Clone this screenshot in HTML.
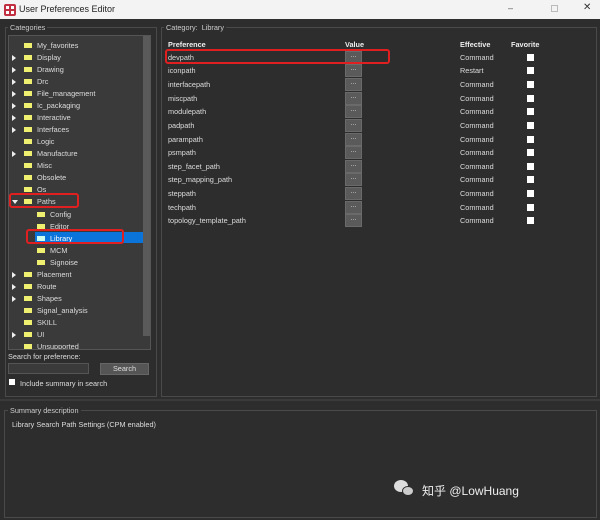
<!DOCTYPE html>
<html><head><meta charset="utf-8"><style>
*{margin:0;padding:0;box-sizing:border-box}
body{width:600px;height:520px;background:#2d2d2d;font-family:"Liberation Sans","Noto Sans CJK SC",sans-serif;font-size:7.3px;color:#ddd;position:relative;overflow:hidden}
.abs{position:absolute}
.title{left:0;top:0;width:600px;height:19px;background:#f3f3f3;color:#222;font-size:9px}
.grp{border:1px solid #4a4a4a}
.lbl{background:#2d2d2d;padding:0 2px;color:#ccc}
.tree{left:8px;top:35px;width:143px;height:315px;background:#3a3a3a;border:1px solid #555;overflow:hidden}
.ti{position:absolute;height:11px;line-height:11px;white-space:nowrap}
.fd{display:inline-block;width:8px;height:5px;background:#f0f070;margin-right:5px;vertical-align:middle;position:relative;top:-1px}
.ar{position:absolute;width:0;height:0;border-top:3px solid transparent;border-bottom:3px solid transparent;border-left:4px solid #eee;top:3px}
.row{position:absolute;left:168px;height:12px;line-height:12px;width:420px}
.btn{position:absolute;left:177px;top:-1px;width:17px;height:13px;background:#5a5a5a;border:1px solid #6a6a6a;text-align:center;line-height:8px;font-size:7px}
.eff{position:absolute;left:292px}
.cb{position:absolute;left:359px;top:2px;width:7px;height:7px;background:#fff}
.red{position:absolute;border:2px solid #e02020;border-radius:3px}
</style></head><body>
<div class="abs title">
<div class="abs" style="left:4px;top:4px;width:12px;height:12px;background:#c03040;border-radius:2px"><div class="abs" style="left:2px;top:2px;width:3px;height:3px;background:#fff"></div><div class="abs" style="left:7px;top:2px;width:3px;height:3px;background:#fff"></div><div class="abs" style="left:2px;top:7px;width:3px;height:3px;background:#fff"></div><div class="abs" style="left:7px;top:7px;width:3px;height:3px;background:#fff"></div></div>
<div class="abs" style="left:19px;top:4px">User Preferences Editor</div>
<div class="abs" style="left:508px;top:3px;color:#555">–</div>
<div class="abs" style="left:551px;top:5px;width:7px;height:7px;border:1px solid #bbb"></div>
<div class="abs" style="left:583px;top:2px;font-size:10px;color:#333">✕</div>
</div>
<div class="abs grp" style="left:5px;top:27px;width:152px;height:370px"></div>
<div class="abs lbl" style="left:8px;top:23px">Categories</div>
<div class="abs tree">
<div class="abs" style="left:134px;top:0;width:7px;height:300px;background:#5a5a5a"></div>
<div class="ti" style="left:15px;top:4px"><span class="fd"></span>My_favorites</div>
<div class="ti" style="left:15px;top:16px"><span class="ar" style="left:-12px"></span><span class="fd"></span>Display</div>
<div class="ti" style="left:15px;top:28px"><span class="ar" style="left:-12px"></span><span class="fd"></span>Drawing</div>
<div class="ti" style="left:15px;top:40px"><span class="ar" style="left:-12px"></span><span class="fd"></span>Drc</div>
<div class="ti" style="left:15px;top:52px"><span class="ar" style="left:-12px"></span><span class="fd"></span>File_management</div>
<div class="ti" style="left:15px;top:64px"><span class="ar" style="left:-12px"></span><span class="fd"></span>Ic_packaging</div>
<div class="ti" style="left:15px;top:76px"><span class="ar" style="left:-12px"></span><span class="fd"></span>Interactive</div>
<div class="ti" style="left:15px;top:88px"><span class="ar" style="left:-12px"></span><span class="fd"></span>Interfaces</div>
<div class="ti" style="left:15px;top:100px"><span class="fd"></span>Logic</div>
<div class="ti" style="left:15px;top:112px"><span class="ar" style="left:-12px"></span><span class="fd"></span>Manufacture</div>
<div class="ti" style="left:15px;top:124px"><span class="fd"></span>Misc</div>
<div class="ti" style="left:15px;top:136px"><span class="fd"></span>Obsolete</div>
<div class="ti" style="left:15px;top:148px"><span class="fd"></span>Os</div>
<div class="ti" style="left:15px;top:160px"><span class="abs" style="left:-12px;top:4px;border-left:3px solid transparent;border-right:3px solid transparent;border-top:4px solid #eee"></span><span class="fd"></span>Paths</div>
<div class="ti" style="left:28px;top:173px"><span class="fd"></span>Config</div>
<div class="ti" style="left:28px;top:185px"><span class="fd"></span>Editor</div>
<div class="abs" style="left:26px;top:196px;width:108px;height:11px;background:#0a74da"></div>
<div class="ti" style="left:28px;top:197px;color:#fff"><span class="fd" style="background:#cfe"></span>Library</div>
<div class="ti" style="left:28px;top:209px"><span class="fd"></span>MCM</div>
<div class="ti" style="left:28px;top:221px"><span class="fd"></span>Signoise</div>
<div class="ti" style="left:15px;top:233px"><span class="ar" style="left:-12px"></span><span class="fd"></span>Placement</div>
<div class="ti" style="left:15px;top:245px"><span class="ar" style="left:-12px"></span><span class="fd"></span>Route</div>
<div class="ti" style="left:15px;top:257px"><span class="ar" style="left:-12px"></span><span class="fd"></span>Shapes</div>
<div class="ti" style="left:15px;top:269px"><span class="fd"></span>Signal_analysis</div>
<div class="ti" style="left:15px;top:281px"><span class="fd"></span>SKILL</div>
<div class="ti" style="left:15px;top:293px"><span class="ar" style="left:-12px"></span><span class="fd"></span>UI</div>
<div class="ti" style="left:15px;top:305px"><span class="fd"></span>Unsupported</div>
</div>
<div class="red" style="left:9px;top:193px;width:70px;height:15px"></div>
<div class="red" style="left:26px;top:229px;width:98px;height:15px"></div>
<div class="abs" style="left:8px;top:352px">Search for preference:</div>
<div class="abs" style="left:8px;top:363px;width:81px;height:11px;background:#3a3a3a;border:1px solid #555"></div>
<div class="abs" style="left:100px;top:363px;width:49px;height:12px;background:#555;border:1px solid #666;text-align:center;line-height:10px">Search</div>
<div class="abs" style="left:9px;top:379px;width:6px;height:6px;background:#fff"></div>
<div class="abs" style="left:20px;top:379px">Include summary in search</div>

<div class="abs grp" style="left:161px;top:27px;width:436px;height:370px"></div>
<div class="abs lbl" style="left:164px;top:23px">Category:&nbsp; Library</div>
<div class="row" style="top:39px;font-weight:bold;color:#eee">Preference<span class="abs" style="left:177px">Value</span><span class="eff">Effective</span><span class="abs" style="left:343px">Favorite</span></div>
<div class="row" style="top:52px">devpath<div class="btn">...</div><span class="eff">Command</span><div class="cb"></div></div>
<div class="row" style="top:65px">iconpath<div class="btn">...</div><span class="eff">Restart</span><div class="cb"></div></div>
<div class="row" style="top:79px">interfacepath<div class="btn">...</div><span class="eff">Command</span><div class="cb"></div></div>
<div class="row" style="top:93px">miscpath<div class="btn">...</div><span class="eff">Command</span><div class="cb"></div></div>
<div class="row" style="top:106px">modulepath<div class="btn">...</div><span class="eff">Command</span><div class="cb"></div></div>
<div class="row" style="top:120px">padpath<div class="btn">...</div><span class="eff">Command</span><div class="cb"></div></div>
<div class="row" style="top:134px">parampath<div class="btn">...</div><span class="eff">Command</span><div class="cb"></div></div>
<div class="row" style="top:147px">psmpath<div class="btn">...</div><span class="eff">Command</span><div class="cb"></div></div>
<div class="row" style="top:161px">step_facet_path<div class="btn">...</div><span class="eff">Command</span><div class="cb"></div></div>
<div class="row" style="top:174px">step_mapping_path<div class="btn">...</div><span class="eff">Command</span><div class="cb"></div></div>
<div class="row" style="top:188px">steppath<div class="btn">...</div><span class="eff">Command</span><div class="cb"></div></div>
<div class="row" style="top:202px">techpath<div class="btn">...</div><span class="eff">Command</span><div class="cb"></div></div>
<div class="row" style="top:215px">topology_template_path<div class="btn">...</div><span class="eff">Command</span><div class="cb"></div></div>
<div class="red" style="left:165px;top:49px;width:225px;height:15px"></div>

<div class="abs" style="left:0;top:399px;width:600px;height:2px;background:#3a3a3a"></div>
<div class="abs grp" style="left:4px;top:410px;width:593px;height:108px"></div>
<div class="abs lbl" style="left:8px;top:406px">Summary description</div>
<div class="abs" style="left:12px;top:420px">Library Search Path Settings (CPM enabled)</div>
<div class="abs" style="left:394px;top:480px;width:14px;height:12px;background:#ddd;border-radius:50%"></div>
<div class="abs" style="left:402px;top:486px;width:12px;height:10px;background:#ccc;border-radius:50%;border:1px solid #2d2d2d"></div>
<div class="abs" style="left:422px;top:482px;font-size:12px;color:#eee">知乎 @LowHuang</div>
</body></html>
